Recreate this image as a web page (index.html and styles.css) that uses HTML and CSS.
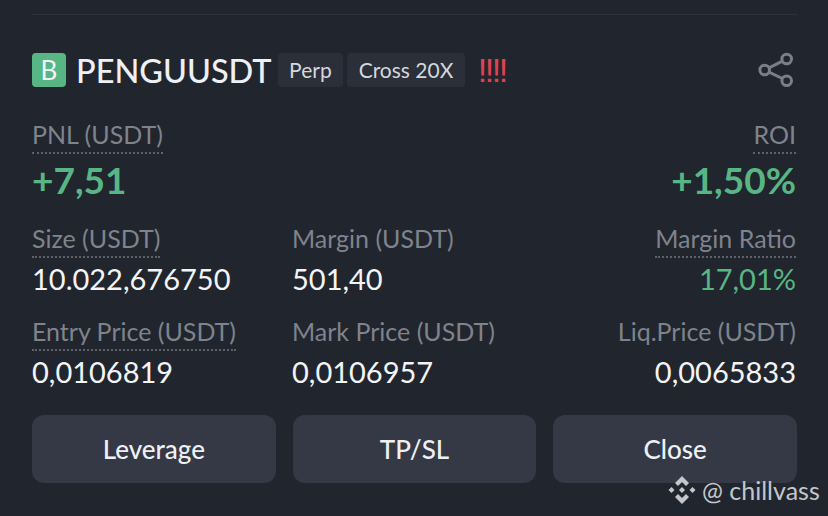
FILE: index.html
```html
<!DOCTYPE html>
<html lang="en">
<head>
    <meta charset="UTF-8">
    <title>Position</title>
    <link rel="stylesheet" href="styles.css">
</head>
<body>
<div class="card">
    <div class="card-rule"></div>

    <div class="pos-header">
        <div class="side-badge">B</div>
        <div class="symbol">PENGUUSDT</div>
        <div class="tag">Perp</div>
        <div class="tag">Cross 20X</div>
        <div class="risk">!!!!</div>
        <svg class="share" width="36" height="36" viewBox="0 0 36 36" fill="none" stroke="#7a7e87" stroke-width="3">
            <circle cx="6.700" cy="18" r="4.800"/>
            <circle cx="28.700" cy="7" r="4.800"/>
            <circle cx="28.700" cy="28.700" r="4.800"/>
            <path d="M11 15.800L24.400 9.200M11 20.200L24.400 26.500"/>
        </svg>
    </div>

    <div class="pnl-row">
        <div class="stat">
            <span class="label dotted">PNL (USDT)</span>
            <span class="big-value">+7,51</span>
        </div>
        <div class="stat right">
            <span class="label dotted">ROI</span>
            <span class="big-value">+1,50%</span>
        </div>
    </div>

    <div class="stat-grid">
        <div class="stat">
            <span class="label dotted">Size (USDT)</span>
            <span class="value">10.022,676750</span>
        </div>
        <div class="stat">
            <span class="label">Margin (USDT)</span>
            <span class="value">501,40</span>
        </div>
        <div class="stat right">
            <span class="label dotted">Margin Ratio</span>
            <span class="value green">17,01%</span>
        </div>
        <div class="stat">
            <span class="label dotted">Entry Price (USDT)</span>
            <span class="value">0,0106819</span>
        </div>
        <div class="stat">
            <span class="label">Mark Price (USDT)</span>
            <span class="value">0,0106957</span>
        </div>
        <div class="stat right">
            <span class="label">Liq.Price (USDT)</span>
            <span class="value">0,0065833</span>
        </div>
    </div>

    <div class="actions">
        <button class="action-btn">Leverage</button>
        <button class="action-btn">TP/SL</button>
        <button class="action-btn">Close</button>
    </div>
</div>

<div class="watermark">
    <svg width="28" height="28" viewBox="0 0 28 28" fill="#c4c6ca">
        <path d="M14 0L21 7L18 10L14 6L10 10L7 7Z"/>
        <path d="M14 28L21 21L18 18L14 22L10 18L7 21Z"/>
        <path d="M3.500 11L6.500 14L3.500 17L0.500 14Z"/>
        <path d="M24.500 11L27.500 14L24.500 17L21.500 14Z"/>
        <path d="M14 11L17 14L14 17L11 14Z"/>
    </svg>
    <span class="watermark-name">@ chillvass</span>
</div>
</body>
</html>
```

FILE: styles.css
```css
html, body {
    margin: 0;
    height: 516px;
    overflow: hidden;
    background-color: #21252e;
}
body {
    position: relative;
    font-family: "Lato", "Liberation Sans", sans-serif;
}
.card {
    padding: 14px 31px 0 32px;
}
.card-rule {
    height: 1px;
    background-color: #2d313a;
}

.pos-header {
    display: flex;
    align-items: center;
    height: 34px;
    margin-top: 38px;
}
.side-badge {
    width: 34px;
    height: 34px;
    border-radius: 4px;
    background-color: #58b685;
    color: #f2f5f7;
    font-size: 26px;
    line-height: 34px;
    text-align: center;
}
.symbol {
    margin-left: 10px;
    margin-right: 6px;
    color: #eef0f4;
    font-size: 32.500px;
    font-weight: 500;
}
.tag {
    height: 34px;
    margin-right: 4px;
    padding: 0 11.500px;
    border-radius: 4px;
    background-color: #2b2f39;
    color: #d5d7db;
    font-size: 21px;
    line-height: 34px;
}
.risk {
    margin-left: 9px;
    color: #e0434f;
    font-family: "Liberation Sans", sans-serif;
    font-size: 34px;
    letter-spacing: -2.500px;
}
.share {
    margin-left: auto;
    margin-right: 3px;
}

.stat {
    display: flex;
    flex-direction: column;
    align-items: flex-start;
}
.stat.right {
    align-items: flex-end;
}
.label {
    height: 36px;
    color: #7f838c;
    font-size: 25px;
    line-height: 32px;
}
.label.dotted {
    height: 34px;
    border-bottom: 2px dotted #5d616a;
}

.pnl-row {
    display: flex;
    justify-content: space-between;
    margin: 31px 1px 0 0;
}
.big-value {
    margin-top: 5px;
    color: #58b685;
    font-size: 37px;
    font-weight: 700;
    line-height: 42px;
}

.stat-grid {
    display: grid;
    grid-template-columns: 260px 1fr auto;
    row-gap: 17px;
    margin: 21px 1px 0 0;
}
.value {
    margin-top: 2px;
    color: #f3f4f6;
    font-size: 29px;
    line-height: 38px;
}
.value.green {
    color: #58b685;
}

.actions {
    display: grid;
    grid-template-columns: repeat(3, 1fr);
    column-gap: 17px;
    margin-top: 24px;
}
.action-btn {
    height: 68px;
    border: 0;
    border-radius: 12px;
    background-color: #343945;
    color: #eef0f4;
    font-family: inherit;
    font-size: 26px;
    font-weight: 500;
}

.watermark {
    position: absolute;
    left: 668px;
    top: 476px;
    display: flex;
    align-items: center;
    gap: 6px;
}
.watermark-name {
    color: #c4c6ca;
    font-size: 25px;
    line-height: 28px;
}
```
